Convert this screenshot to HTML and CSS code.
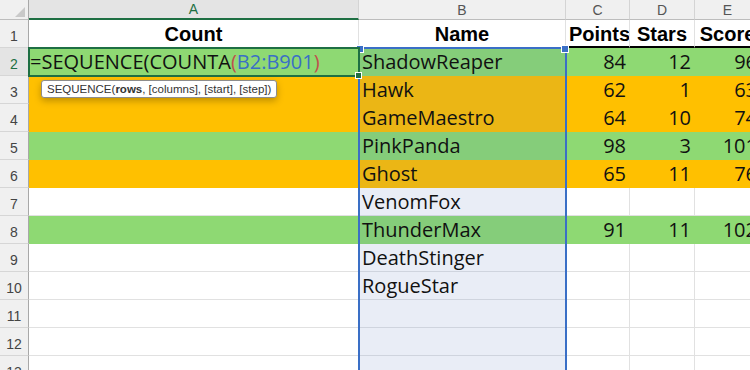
FILE: index.html
```html
<html>
<head>
  <link rel="stylesheet" href="styles.css">
</head>
<body>
  <div class="sheet">
    <div class="corner">
      <svg width="28" height="19" viewBox="0 0 28 19"><polygon points="25,7 25,17 15,17" fill="#c9c9c9"/></svg>
    </div>
    <div class="colhead active">A</div>
    <div class="colhead">B</div>
    <div class="colhead">C</div>
    <div class="colhead">D</div>
    <div class="colhead">E</div>

    <!-- row 1: headers -->
    <div class="rowhead">1</div>
    <div class="cell head">Count</div>
    <div class="cell head">Name</div>
    <div class="cell head rule">Points</div>
    <div class="cell head rule">Stars</div>
    <div class="cell head rule">Score</div>

    <div class="rowhead active">2</div>
    <div class="cell green edit">=SEQUENCE(COUNTA<span class="paren">(</span><span class="ref">B2:B901</span><span class="paren">)</span></div>
    <div class="cell green inref">ShadowReaper</div>
    <div class="cell green num">84</div>
    <div class="cell green num">12</div>
    <div class="cell green num">96</div>

    <div class="rowhead">3</div>
    <div class="cell gold"></div>
    <div class="cell gold inref">Hawk</div>
    <div class="cell gold num">62</div>
    <div class="cell gold num">1</div>
    <div class="cell gold num">63</div>

    <div class="rowhead">4</div>
    <div class="cell gold"></div>
    <div class="cell gold inref">GameMaestro</div>
    <div class="cell gold num">64</div>
    <div class="cell gold num">10</div>
    <div class="cell gold num">74</div>

    <div class="rowhead">5</div>
    <div class="cell green"></div>
    <div class="cell green inref">PinkPanda</div>
    <div class="cell green num">98</div>
    <div class="cell green num">3</div>
    <div class="cell green num">101</div>

    <div class="rowhead">6</div>
    <div class="cell gold"></div>
    <div class="cell gold inref">Ghost</div>
    <div class="cell gold num">65</div>
    <div class="cell gold num">11</div>
    <div class="cell gold num">76</div>

    <div class="rowhead">7</div>
    <div class="cell"></div>
    <div class="cell inref">VenomFox</div>
    <div class="cell"></div>
    <div class="cell"></div>
    <div class="cell"></div>

    <div class="rowhead">8</div>
    <div class="cell green"></div>
    <div class="cell green inref">ThunderMax</div>
    <div class="cell green num">91</div>
    <div class="cell green num">11</div>
    <div class="cell green num">102</div>

    <div class="rowhead">9</div>
    <div class="cell"></div>
    <div class="cell inref">DeathStinger</div>
    <div class="cell"></div>
    <div class="cell"></div>
    <div class="cell"></div>

    <div class="rowhead">10</div>
    <div class="cell"></div>
    <div class="cell inref">RogueStar</div>
    <div class="cell"></div>
    <div class="cell"></div>
    <div class="cell"></div>

    <div class="rowhead">11</div>
    <div class="cell"></div>
    <div class="cell inref"></div>
    <div class="cell"></div>
    <div class="cell"></div>
    <div class="cell"></div>

    <div class="rowhead">12</div>
    <div class="cell"></div>
    <div class="cell inref"></div>
    <div class="cell"></div>
    <div class="cell"></div>
    <div class="cell"></div>

    <div class="rowhead">13</div>
    <div class="cell"></div>
    <div class="cell inref"></div>
    <div class="cell"></div>
    <div class="cell"></div>
    <div class="cell"></div>

    <!-- formula reference box over B2:B901 -->
    <div class="refbox"><span class="knob left"></span><span class="knob right"></span></div>

    <!-- function tooltip -->
    <div class="tip">SEQUENCE(<b>rows</b>, [columns], [start], [step])</div>
  </div>
</body>
</html>
```

FILE: styles.css
```css
body {
  margin: 0;
  background-color: white;
  overflow: hidden;
}
.sheet {
  position: relative;
  display: grid;
  grid-template-columns: 29px 330px 207px 64px 65px 66px;
  grid-template-rows: 20px;
  grid-auto-rows: 28px;
  width: 761px;
  font-family: "Open Sans", sans-serif;
  color: #111;
}
.corner {
  background-color: #f0f0f0;
  border-right: 1px solid #a8a8a8;
  border-bottom: 1px solid #bdbdbd;
  box-sizing: border-box;
}
.corner svg {
  display: block;
}
.colhead {
  background-color: #f0f0f0;
  border-right: 1px solid #d4d4d4;
  border-bottom: 1px solid #bdbdbd;
  box-sizing: border-box;
  font-family: "Liberation Sans", Arial, sans-serif;
  font-size: 14px;
  color: #555;
  text-align: center;
  line-height: 20px;
}
.colhead.active {
  background-color: #e4e4e4;
  color: #1e6f43;
  border-bottom: 2px solid #1e6f43;
  line-height: 19px;
}
.rowhead {
  background-color: #f0f0f0;
  border-right: 1px solid #a8a8a8;
  border-bottom: 1px solid #d6d6d6;
  box-sizing: border-box;
  font-family: "Liberation Sans", Arial, sans-serif;
  font-size: 14px;
  color: #444;
  text-align: center;
  line-height: 32px;
}
.rowhead.active {
  background-color: #e4e4e4;
  color: #1e6f43;
}
.cell {
  border-right: 1px solid #e1e1e1;
  border-bottom: 1px solid #e1e1e1;
  box-sizing: border-box;
  font-size: 20px;
  line-height: 28px;
  padding: 0 3px;
  white-space: nowrap;
  overflow: hidden;
}
.head {
  font-family: "Liberation Sans", Arial, sans-serif;
  font-weight: bold;
  text-align: center;
  color: black;
}
.rule {
  border-bottom: 2px solid black;
}
.num {
  text-align: right;
}
.green {
  background-color: #8ed973;
  border-color: #8ed973;
}
.gold {
  background-color: #ffc000;
  border-color: #ffc000;
}
.inref {
  background-color: #e9edf6;
  border-color: #cfd4de;
}
.green.inref {
  background-color: #85cd7a;
  border-color: #85cd7a;
}
.gold.inref {
  background-color: #ebb615;
  border-color: #ebb615;
}
.edit {
  position: relative;
  z-index: 2;
  margin: -1px;
  border: 2px solid #1e6f43;
  padding: 0;
  line-height: 26px;
  overflow: visible;
}
.edit::after {
  content: "";
  position: absolute;
  right: -4px;
  bottom: -4px;
  width: 5px;
  height: 5px;
  background-color: #1e6f43;
  border: 1px solid white;
}
.paren {
  color: #c0504d;
}
.ref {
  color: #3a6fc6;
}
.refbox {
  position: absolute;
  left: 358px;
  top: 47px;
  width: 209px;
  height: 340px;
  border: 2px solid #3a6fc6;
  box-sizing: border-box;
  z-index: 1;
}
.knob {
  position: absolute;
  top: -4px;
  width: 6px;
  height: 6px;
  background-color: #3a6fc6;
  border: 1px solid white;
}
.knob.left {
  left: -4px;
}
.knob.right {
  right: -4px;
}
.tip {
  position: absolute;
  left: 41px;
  top: 80px;
  height: 16px;
  padding: 0 5px;
  border: 1px solid #8d8d8d;
  border-radius: 3px;
  background-color: white;
  box-shadow: 0 3px 7px rgba(0, 0, 0, 0.25);
  font-family: "Liberation Sans", Arial, sans-serif;
  font-size: 11.5px;
  line-height: 16px;
  color: #333;
  z-index: 3;
}
```
